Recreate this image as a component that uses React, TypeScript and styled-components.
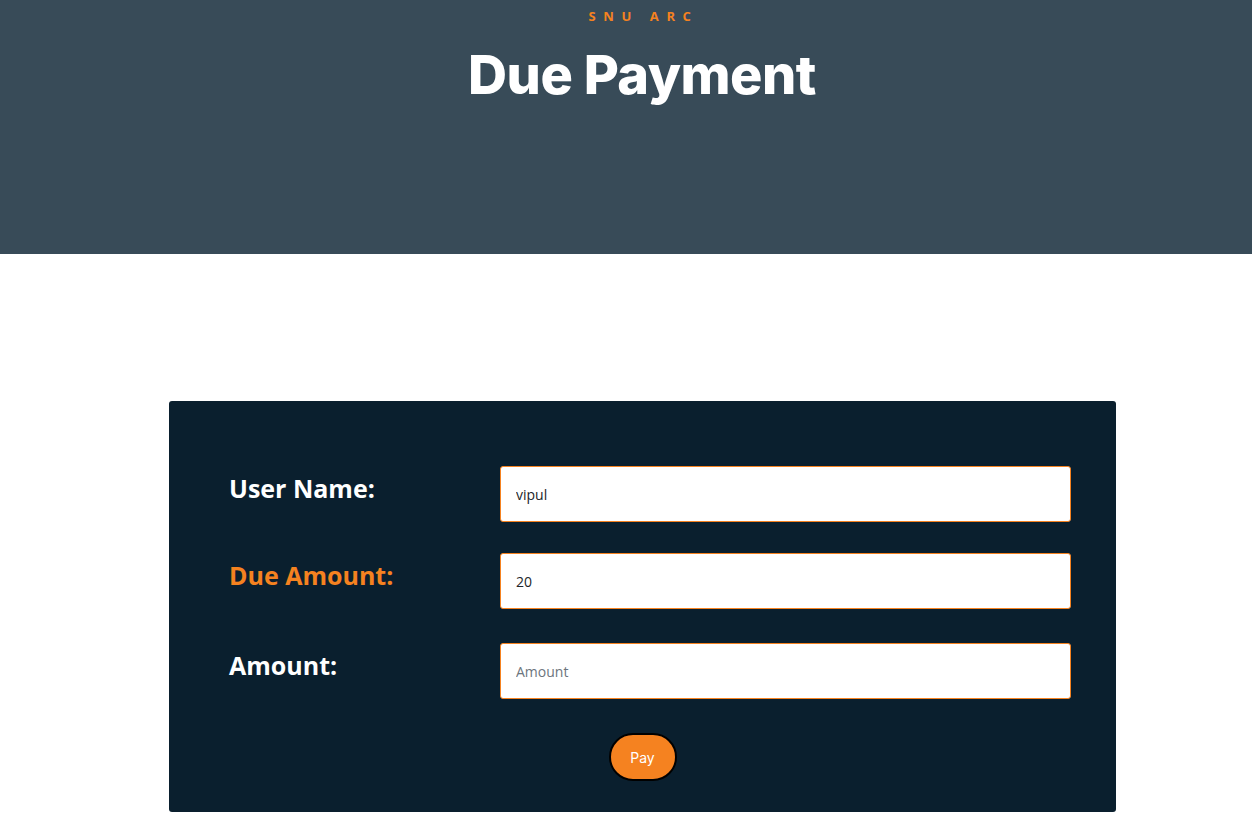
import React from 'react'
import styled, { createGlobalStyle } from 'styled-components'

const GlobalStyle = createGlobalStyle`
  body {
    margin: 0;
    background: #ffffff;
    font-family: 'Open Sans', 'Liberation Sans', sans-serif;
  }
`

interface Field {
  label: string
  value?: string
  placeholder?: string
  highlight?: boolean
  offset: number
}

const fields: Field[] = [
  { label: 'User Name:', value: 'vipul', offset: 0 },
  { label: 'Due Amount:', value: '20', highlight: true, offset: 31 },
  { label: 'Amount:', placeholder: 'Amount', offset: 34 },
]

const App: React.FC = () => {
  return (
    <>
      <GlobalStyle />
      <Banner>
        <Kicker>SNU ARC</Kicker>
        <Title>Due Payment</Title>
      </Banner>
      <Main>
        <Card>
          {fields.map(({ label, value, placeholder, highlight, offset }) => (
            <Row key={label} $offset={offset}>
              <Label $highlight={highlight}>{label}</Label>
              <Input defaultValue={value} placeholder={placeholder} />
            </Row>
          ))}
          <Actions>
            <PayButton>Pay</PayButton>
          </Actions>
        </Card>
      </Main>
    </>
  )
}

const Banner = styled.header`
  height: 254px;
  background: #384b58;
  display: flex;
  flex-direction: column;
  align-items: center;
  padding: 7px 0 0 32px;
  box-sizing: border-box;
`

const Kicker = styled.span`
  color: #f58220;
  font-size: 13px;
  font-weight: 700;
  letter-spacing: 7.6px;
  margin-right: -3px;
  line-height: 18px;
`

const Title = styled.h1`
  margin: 18px 0 0;
  color: #ffffff;
  font-family: 'Inter', 'Open Sans', sans-serif;
  font-size: 54px;
  font-weight: 800;
  line-height: 64px;
  letter-spacing: -0.5px;
`

const Main = styled.main`
  padding: 147px 0 0 32px;
  display: flex;
  justify-content: center;
`

const Card = styled.section`
  width: 947px;
  margin-left: 1px;
  background: #0a1f2e;
  border-radius: 3px;
  padding: 65px 45px 31px 60px;
  box-sizing: border-box;
  display: flex;
  flex-direction: column;
`

const Row = styled.div<{ $offset: number }>`
  display: grid;
  grid-template-columns: 271px 1fr;
  align-items: center;
  margin-top: ${({ $offset }) => $offset}px;
`

const Label = styled.label<{ $highlight?: boolean }>`
  color: ${({ $highlight }) => ($highlight ? '#f58220' : '#ffffff')};
  font-size: 25px;
  font-weight: 700;
  padding-bottom: 12px;
`

const Input = styled.input`
  height: 56px;
  box-sizing: border-box;
  border: 1px solid #f58220;
  border-radius: 3px;
  padding: 0 15px;
  font-family: 'Open Sans', sans-serif;
  font-size: 14px;
  color: #212529;
  background: #ffffff;
  outline: none;

  &::placeholder {
    color: #6c757d;
  }
`

const Actions = styled.div`
  display: flex;
  justify-content: center;
  margin: 34px 0 0 -15px;
`

const PayButton = styled.button`
  width: 68px;
  height: 48px;
  box-sizing: border-box;
  border: 2px solid #000000;
  border-radius: 24px;
  background: #f58220;
  color: #ffffff;
  font-family: 'Inter', sans-serif;
  font-size: 14px;
  font-weight: 400;
  cursor: pointer;
`

export default App
